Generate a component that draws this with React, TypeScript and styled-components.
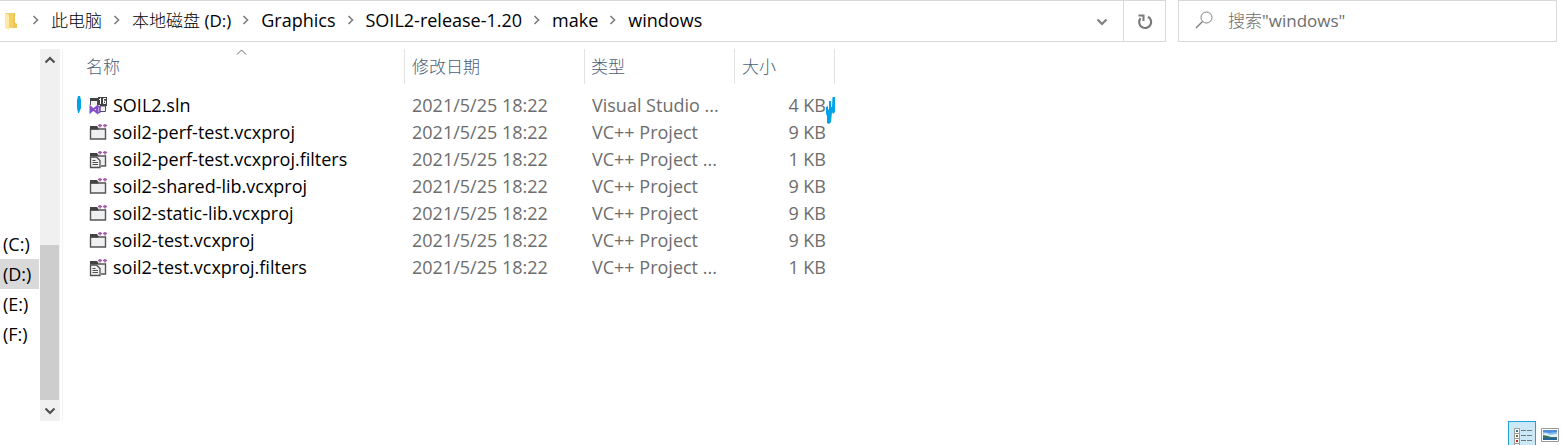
import React from "react";
import styled, { createGlobalStyle } from "styled-components";

const GlobalStyle = createGlobalStyle`
  * { box-sizing: border-box; }
  body {
    margin: 0;
    background: #fff;
    color: #000;
    font-family: "Open Sans", "Noto Sans CJK SC", sans-serif;
    font-size: 18px;
    line-height: 27px;
  }
  button, input { font: inherit; }
  :lang(zh) {
    font-size: 17px;
    font-family: "Open Sans", "Noto Sans CJK SC Light", "Noto Sans CJK SC", sans-serif;
  }
`;

const Window = styled.div`
  display: flex;
  flex-direction: column;
  height: 100vh;
  overflow: hidden;
`;

const Toolbar = styled.header`
  display: flex;
  gap: 12px;
  height: 42px;
  padding-right: 6px;
  flex: none;
`;

const AddressBar = styled.nav`
  display: flex;
  flex: 1;
  border: 1px solid #d9d9d9;
  border-left: 0;
`;

const Place = styled.div`
  display: flex;
  align-items: center;
  width: 21px;
  padding-left: 4px;
`;

const Crumbs = styled.ol`
  display: flex;
  align-items: center;
  flex: 1;
  margin: 0;
  padding: 0 0 2px;
  list-style: none;
`;

const Crumb = styled.li`
  display: flex;
  align-items: center;
  white-space: pre;
`;

const CrumbLink = styled.a`
  color: #000;
  text-decoration: none;
`;

const IconButton = styled.button<{ $divided?: boolean }>`
  display: flex;
  align-items: center;
  justify-content: center;
  width: 42px;
  padding: 2px 0 0;
  border: 0;
  border-left: ${(p) => (p.$divided ? "1px solid #d9d9d9" : "0")};
  background: none;
`;

const SearchBox = styled.label`
  display: flex;
  align-items: center;
  gap: 14px;
  width: 379px;
  padding: 0 0 2px 16px;
  border: 1px solid #d9d9d9;
`;

const SearchInput = styled.input`
  flex: 1;
  min-width: 0;
  padding: 0;
  border: 0;
  outline: 0;
  background: none;
  &::placeholder { color: #6d6d6d; opacity: 1; }
`;

const Main = styled.main`
  display: flex;
  flex: 1;
  min-height: 0;
  padding-top: 7px;
`;

const Drives = styled.nav`
  display: flex;
  flex-direction: column;
  width: 39px;
  padding-top: 180px;
  margin-right: 1px;
`;

const Drive = styled.a<{ $current?: boolean }>`
  padding-left: 3px;
  line-height: 30px;
  color: #000;
  text-decoration: none;
  background: ${(p) => (p.$current ? "#d9d9d9" : "transparent")};
`;

const ScrollBar = styled.div`
  display: flex;
  flex-direction: column;
  width: 20px;
  padding-right: 1px;
  background: #f0f0f0;
`;

const ScrollButton = styled.button`
  display: flex;
  align-items: center;
  justify-content: center;
  height: 21px;
  padding: 0;
  border: 0;
  background: none;
`;

const ScrollTrack = styled.div`
  display: flex;
  flex-direction: column;
  justify-content: flex-end;
  flex: 1;
`;

const ScrollThumb = styled.div`
  height: 47%;
  background: #cdcdcd;
`;

const Files = styled.section`
  flex: 1;
  margin-left: 2px;
  border-left: 1px solid #f3f3f3;
`;

const FileTable = styled.table`
  width: 772px;
  table-layout: fixed;
  border-collapse: separate;
  border-spacing: 0;
`;

const HeadCell = styled.th<{ $width: number; $indent: number }>`
  position: relative;
  width: ${(p) => p.$width}px;
  height: 35px;
  padding: 0 0 0 ${(p) => p.$indent}px;
  border-right: 1px solid #e2e2e2;
  color: #4c607a;
  font-weight: 300;
  text-align: left;
`;

const SortMark = styled.svg`
  position: absolute;
  top: 0;
  right: 157px;
`;

const Spacer = styled.tr`
  height: 8px;
`;

const Cell = styled.td<{ $align?: "right" }>`
  position: relative;
  height: 27px;
  padding: 0 9px 0 7px;
  color: #6d6d6d;
  text-align: ${(p) => p.$align ?? "left"};
  white-space: nowrap;
`;

const NameCell = styled(Cell)`
  padding-left: 26px;
  color: #000;
`;

const FileName = styled.span`
  display: flex;
  align-items: center;
  gap: 6px;
`;

const Mark = styled.svg<{ $side: "left" | "right" }>`
  position: absolute;
  top: 2px;
  ${(p) => (p.$side === "left" ? "left: 13px;" : "right: 0;")}
`;

const StatusBar = styled.footer`
  display: flex;
  justify-content: flex-end;
  gap: 4px;
  flex: none;
  height: 24px;
  padding-right: 3px;
  overflow: hidden;
`;

const ViewButton = styled.button<{ $active?: boolean }>`
  width: ${(p) => (p.$active ? 28 : 20)}px;
  height: 28px;
  padding: 0;
  border: ${(p) => (p.$active ? "1px solid #26a0da" : "0")};
  background: ${(p) => (p.$active ? "#cbe8f6" : "none")};
  svg { display: block; }
`;

const FolderIcon = () => (
  <svg width="14" height="18" viewBox="0 0 14 18" aria-hidden="true">
    <path d="M1 1h10v10l2 1v4H1z" fill="#f3cf67" />
    <path d="M9 1h2v10l2 1v4H9z" fill="#f0c656" />
    <path d="M1 1l4 2v15l-4-2z" fill="#ffe9a6" />
  </svg>
);

const Separator = () => (
  <svg width="30" height="12" viewBox="0 0 30 12" aria-hidden="true">
    <path d="M12.500 2l4 4-4 4" fill="none" stroke="#808080" strokeWidth="1.700" />
  </svg>
);

const Chevron = ({ up, color = "#505050" }: { up?: boolean; color?: string }) => (
  <svg width="12" height="8" viewBox="0 0 12 8" aria-hidden="true">
    <path d={up ? "M1.500 6.500L6 2l4.500 4.500" : "M1.500 1.500L6 6l4.500-4.500"} fill="none" stroke={color} strokeWidth="2.200" />
  </svg>
);

const RefreshIcon = () => (
  <svg width="16" height="18" viewBox="0 0 16 18" aria-hidden="true">
    <path d="M11 3.700a6 6 0 1 1-7.500 1.500" fill="none" stroke="#7a7a7a" strokeWidth="2.200" />
    <path d="M1.500 2.500h5v5.500" fill="none" stroke="#7a7a7a" strokeWidth="2" />
  </svg>
);

const SearchIcon = () => (
  <svg width="19" height="18" viewBox="0 0 19 18" aria-hidden="true">
    <circle cx="11.500" cy="6.500" r="5.500" fill="none" stroke="#808080" />
    <path d="M7.500 10.500L1 17" stroke="#808080" strokeWidth="1.400" />
  </svg>
);

const Plus = () => (
  <path d="M9 1.500h4M11-.5v4M14 1.500h4M16-.5v4" stroke="#a45aa8" strokeWidth="1.500" />
);

const SolutionIcon = () => (
  <svg width="18" height="18" viewBox="0 0 18 18" aria-hidden="true">
    <path d="M1.500 9V2h7v7zM11 14.500h5.500V9H11z" fill="#f0eff1" stroke="#505050" />
    <path d="M1 1h8v3H1z" fill="#424242" />
    <path d="M9 0h9v9H9z" fill="#424242" />
    <path d="M11.500 1v6M10 2.500h1.500M17 1.500h-2.500v5h2v-2.500h-2" fill="none" stroke="#fff" />
    <path d="M0 8h11v8H0z" fill="#fff" />
    <path d="M1.500 10v5L8 9.500v6zM8 9l2.500 1v5L8 16" fill="none" stroke="#864fca" strokeWidth="2" />
  </svg>
);

const ProjectIcon = () => (
  <svg width="18" height="18" viewBox="0 0 18 18" aria-hidden="true">
    <path d="M1.500 5h15v10h-15z" fill="#f0eff1" stroke="#565656" strokeWidth="1.400" />
    <path d="M1 2h7l1.500 2v1.500H1z" fill="#424242" />
    <Plus />
  </svg>
);

const FiltersIcon = () => (
  <svg width="18" height="18" viewBox="0 0 18 18" aria-hidden="true">
    <path d="M9 5h7.500v10H12" fill="#f0eff1" stroke="#565656" strokeWidth="1.400" />
    <path d="M1 2h7l1.500 2v1.500H1z" fill="#424242" />
    <path d="M1.500 6h6l3.500 3.500v7h-9.500z" fill="#f0eff1" stroke="#505050" strokeWidth="1.300" />
    <path d="M3.500 9.500h3M3.500 11.500h5.500M3.500 13.500h5.500" stroke="#505050" />
    <Plus />
  </svg>
);

const DetailsIcon = () => (
  <svg width="26" height="26" viewBox="0 0 26 26" aria-hidden="true">
    {[6, 11, 16, 21].map((y, i) => (
      <g key={y}>
        <path d={`M5.500 ${y + 0.5}h5v5h-5z`} fill="#fff" stroke="#999" />
        <path d={`M7 ${y + 2}h2v2H7z`} fill={["#2f7795", "#756b3a", "#c52b1b", "#2f7795"][i]} />
        <path d={`M12 ${y + 2.5}h5M18 ${y + 2.5}h5`} stroke="#777" />
      </g>
    ))}
  </svg>
);

const PictureIcon = () => (
  <svg width="20" height="28" viewBox="0 0 20 28" aria-hidden="true">
    <path d="M1.500 7.500h17v13h-17z" fill="#fff" stroke="#999" />
    <path d="M3 9h14v10H3z" fill="#8fc1ed" />
    <path d="M3 9h14v2l-7 1-7-1z" fill="#4d8edb" />
    <path d="M3 13l3-1 4 2 7-1v3H3z" fill="#e4f2fa" />
    <path d="M3 14l5 1 3 1h6v1H3z" fill="#397557" />
    <path d="M3 17h14v2H3z" fill="#28639b" />
  </svg>
);

const path = [
  { label: "此电脑", lang: "zh" },
  { label: "本地磁盘 (D:)", lang: "zh" },
  { label: "Graphics" },
  { label: "SOIL2-release-1.20" },
  { label: "make" },
  { label: "windows" },
];

const drives = ["(C:)", "(D:)", "(E:)", "(F:)"];

const columns = [
  { label: "名称", width: 342, indent: 23 },
  { label: "修改日期", width: 180, indent: 7 },
  { label: "类型", width: 150, indent: 6 },
  { label: "大小", width: 100, indent: 7 },
];

const files = [
  { name: "SOIL2.sln", type: "Visual Studio ...", size: "4 KB", Icon: SolutionIcon, marked: true },
  { name: "soil2-perf-test.vcxproj", type: "VC++ Project", size: "9 KB", Icon: ProjectIcon },
  { name: "soil2-perf-test.vcxproj.filters", type: "VC++ Project ...", size: "1 KB", Icon: FiltersIcon },
  { name: "soil2-shared-lib.vcxproj", type: "VC++ Project", size: "9 KB", Icon: ProjectIcon },
  { name: "soil2-static-lib.vcxproj", type: "VC++ Project", size: "9 KB", Icon: ProjectIcon },
  { name: "soil2-test.vcxproj", type: "VC++ Project", size: "9 KB", Icon: ProjectIcon },
  { name: "soil2-test.vcxproj.filters", type: "VC++ Project ...", size: "1 KB", Icon: FiltersIcon },
];

export default function App() {
  return (
    <Window>
      <GlobalStyle />
      <Toolbar>
        <AddressBar aria-label="Path">
          <Place><FolderIcon /></Place>
          <Crumbs>
            {path.map(({ label, lang }) => (
              <Crumb key={label}>
                <Separator />
                <CrumbLink href="#" lang={lang}>{label}</CrumbLink>
              </Crumb>
            ))}
          </Crumbs>
          <IconButton aria-label="Previous locations"><Chevron color="#808080" /></IconButton>
          <IconButton aria-label="Refresh" $divided><RefreshIcon /></IconButton>
        </AddressBar>
        <SearchBox>
          <SearchIcon />
          <SearchInput type="text" lang="zh" aria-label="Search" placeholder={'搜索"windows"'} />
        </SearchBox>
      </Toolbar>
      <Main>
        <Drives aria-label="Drives">
          {drives.map((d) => (
            <Drive key={d} href="#" $current={d === "(D:)"}>{d}</Drive>
          ))}
        </Drives>
        <ScrollBar>
          <ScrollButton aria-label="Scroll up"><Chevron up /></ScrollButton>
          <ScrollTrack><ScrollThumb /></ScrollTrack>
          <ScrollButton aria-label="Scroll down"><Chevron /></ScrollButton>
        </ScrollBar>
        <Files>
          <FileTable>
            <thead>
              <tr>
                {columns.map((c, i) => (
                  <HeadCell key={c.label} lang="zh" $width={c.width} $indent={c.indent}>
                    {c.label}
                    {i === 0 && (
                      <SortMark width="11" height="7" viewBox="0 0 11 7" aria-hidden="true">
                        <path d="M1 5.500L5.500 1 10 5.500" fill="none" stroke="#666" />
                      </SortMark>
                    )}
                  </HeadCell>
                ))}
              </tr>
            </thead>
            <tbody>
              <Spacer aria-hidden="true" />
              {files.map(({ name, type, size, Icon, marked }) => (
                <tr key={name}>
                  <NameCell>
                    {marked && (
                      <Mark $side="left" width="6" height="20" viewBox="0 0 6 20" aria-hidden="true">
                        <path d="M2 2h2l1 4v8l-2 5H2L1 14V6z" fill="#00a2e8" />
                      </Mark>
                    )}
                    <FileName><Icon />{name}</FileName>
                  </NameCell>
                  <Cell>2021/5/25 18:22</Cell>
                  <Cell>{type}</Cell>
                  <Cell $align="right">
                    {size}
                    {marked && (
                      <Mark $side="right" width="10" height="30" viewBox="0 0 10 30" aria-hidden="true">
                        <path d="M7.500 3H10v15l-2 2-1-2-1 10-2 2-2-1v-7l-1-2v-7l2-1v4l1-1V7h2v6h1z" fill="#00a2e8" />
                      </Mark>
                    )}
                  </Cell>
                </tr>
              ))}
            </tbody>
          </FileTable>
        </Files>
      </Main>
      <StatusBar>
        <ViewButton $active aria-label="Details view"><DetailsIcon /></ViewButton>
        <ViewButton aria-label="Large icons view"><PictureIcon /></ViewButton>
      </StatusBar>
    </Window>
  );
}
